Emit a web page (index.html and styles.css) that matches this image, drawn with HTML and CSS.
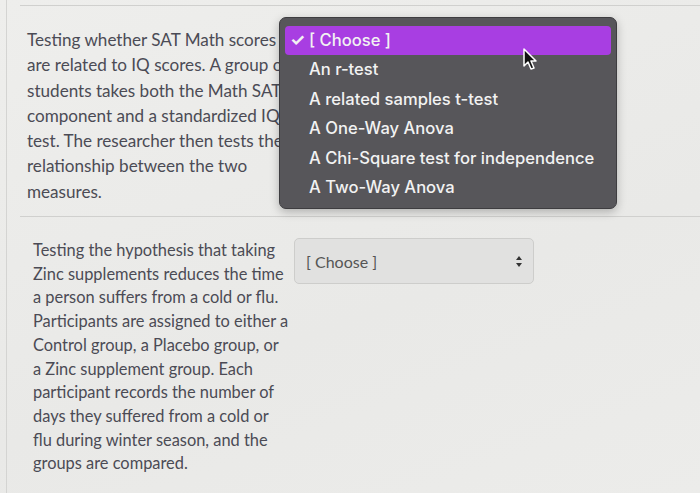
FILE: index.html
```html
<!DOCTYPE html>
<html>
<head>
    <link rel="stylesheet" href="styles.css">
</head>
<body>
    <div class="quiz">
        <div class="question">
            <p class="prompt">Testing whether SAT Math scores are related to IQ scores. A group of students takes both the Math SAT component and a standardized IQ test. The researcher then tests the relationship between the two measures.</p>
            <div class="answer">
                <div class="select">
                    <span>[ Choose ]</span>
                    <span class="arrows"></span>
                </div>
                <ul class="menu">
                    <li class="selected"><span class="check">&#10003;</span>[ Choose ]</li>
                    <li>An r-test</li>
                    <li>A related samples t-test</li>
                    <li>A One-Way Anova</li>
                    <li>A Chi-Square test for independence</li>
                    <li>A Two-Way Anova</li>
                </ul>
                <svg class="cursor" width="16" height="24" viewBox="0 0 16 24">
                    <path d="M1 1 L1 18 L5 14 L8 21 L11 20 L8 13 L13 13 Z" fill="#111" stroke="#fff" stroke-width="1.5" stroke-linejoin="round"/>
                </svg>
            </div>
        </div>

        <div class="question">
            <p class="prompt">Testing the hypothesis that taking Zinc supplements reduces the time a person suffers from a cold or flu. Participants are assigned to either a Control group, a Placebo group, or a Zinc supplement group. Each participant records the number of days they suffered from a cold or flu during winter season, and the groups are compared.</p>
            <div class="answer">
                <div class="select">
                    <span>[ Choose ]</span>
                    <span class="arrows"></span>
                </div>
            </div>
        </div>
    </div>
</body>
</html>
```

FILE: styles.css
```css
* {
    margin: 0;
    padding: 0;
    box-sizing: border-box;
}

body {
    background: linear-gradient(160deg, #eeeeec 0%, #e9e9e7 60%, #ececea 100%);
    color: #4b4b55;
    font-family: Lato, 'Liberation Sans', sans-serif;
    min-height: 100vh;
    overflow: hidden;
}

.quiz {
    margin-left: 6px;
    padding-top: 5px;
    border-left: 1px solid #d4d4d2;
    min-height: 493px;
}

.question {
    display: flex;
    gap: 4px;
    margin-left: 13px;
    padding: 21px 0 12px 7px;
    border-top: 1px solid #d0d0ce;
}

.question + .question {
    padding-top: 21px;
    padding-left: 13px;
}

.prompt {
    width: 264px;
    font-size: 17.1px;
    line-height: 25.3px;
}

.question + .question .prompt {
    width: 257px;
    font-size: 16.4px;
    line-height: 23.7px;
}

.answer {
    position: relative;
}

.select {
    width: 240px;
    height: 46px;
    display: flex;
    align-items: center;
    justify-content: space-between;
    padding: 0 10px 0 11px;
    background: #e1e1e0;
    border: 1px solid #cdcdcb;
    border-radius: 5px;
    color: #555;
    font-size: 16px;
}

.arrows {
    width: 7px;
    height: 11px;
    position: relative;
}

.arrows::before,
.arrows::after {
    content: '';
    position: absolute;
    left: 0;
    border-left: 3.5px solid transparent;
    border-right: 3.5px solid transparent;
}

.arrows::before {
    top: 0;
    border-bottom: 4.5px solid #333;
}

.arrows::after {
    bottom: 0;
    border-top: 4.5px solid #333;
}

/* native popup menu opened over the first select */
.menu {
    position: absolute;
    left: -16px;
    top: -10px;
    width: 338px;
    padding: 8px 5px 6px;
    list-style: none;
    background: #57565a;
    border: 1px solid #3e3d40;
    border-radius: 7px;
    box-shadow: 0 3px 10px rgba(0, 0, 0, 0.25);
    color: #f2f2f2;
    font-family: Inter, 'Open Sans', sans-serif;
    font-size: 16.6px;
    font-weight: 500;
}

.menu li {
    height: 29.4px;
    line-height: 29.4px;
    padding-left: 24px;
    border-radius: 4px;
    position: relative;
}

.menu li.selected {
    background: #a83ee2;
}

.check {
    position: absolute;
    left: 5px;
    font-size: 17px;
    font-weight: 700;
}

.cursor {
    position: absolute;
    left: 228px;
    top: 21px;
}
```
